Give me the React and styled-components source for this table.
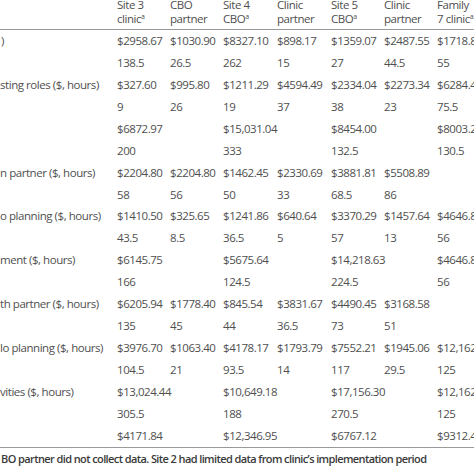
import React from "react";
import styled, { createGlobalStyle } from "styled-components";

const Global = createGlobalStyle`
  html, body {
    margin: 0;
    padding: 0;
    background: #ffffff;
    overflow: hidden;
  }
  body {
    width: 474px;
    height: 474px;
    font-family: "Open Sans", "Noto Sans", sans-serif;
    color: #4f4f4f;
  }
`;

const COLS = "117px 53px 53px 54px 54px 53px 53px 60px";

const Page = styled.div`
  width: 474px;
  overflow: hidden;
  font-size: 11.5px;
  letter-spacing: -0.45px;
`;

const Header = styled.div`
  display: grid;
  grid-template-columns: ${COLS};
  margin-top: -2px;
  padding-bottom: 3px;
  border-bottom: 1px solid #9a9a9a;
  line-height: 14px;
`;

const HeadCell = styled.div`
  white-space: nowrap;
  overflow: visible;
`;

const Sup = styled.sup`
  font-size: 7px;
  line-height: 0;
  vertical-align: 4px;
`;

const Body = styled.div`
  border-bottom: 1px solid #9a9a9a;
`;

const Row = styled.div`
  display: grid;
  grid-template-columns: ${COLS};
  height: 21.94px;
  align-items: center;
  line-height: 16px;
`;

const Cell = styled.div`
  white-space: nowrap;
  overflow: visible;
`;

const Label = styled(Cell)`
  padding-left: ${(p) => p.$indent || 0}px;
`;

const Footnote = styled.div`
  padding-top: 4px;
  padding-left: 1px;
  line-height: 14px;
  font-size: 11px;
  font-weight: 600;
  letter-spacing: -0.6px;
  color: #3a3a3a;
  white-space: nowrap;
`;

const headers = [
  ["Site 3", "clinic", true],
  ["CBO", "partner", false],
  ["Site 4", "CBO", true],
  ["Clinic", "partner", false],
  ["Site 5", "CBO", true],
  ["Clinic", "partner", false],
  ["Family", "7 clinic", true],
];

const rows = [
  [")", "$2958.67", "$1030.90", "$8327.10", "$898.17", "$1359.07", "$2487.55", "$1718.80"],
  ["", "138.5", "26.5", "262", "15", "27", "44.5", "55"],
  ["sting roles ($, hours)", "$327.60", "$995.80", "$1211.29", "$4594.49", "$2334.04", "$2273.34", "$6284.40"],
  ["", "9", "26", "19", "37", "38", "23", "75.5"],
  ["", "$6872.97", "", "$15,031.04", "", "$8454.00", "", "$8003.20"],
  ["", "200", "", "333", "", "132.5", "", "130.5"],
  ["n partner ($, hours)", "$2204.80", "$2204.80", "$1462.45", "$2330.69", "$3881.81", "$5508.89", ""],
  ["", "58", "56", "50", "33", "68.5", "86", ""],
  ["o planning ($, hours)", "$1410.50", "$325.65", "$1241.86", "$640.64", "$3370.29", "$1457.64", "$4646.80"],
  ["", "43.5", "8.5", "36.5", "5", "57", "13", "56"],
  ["ment ($, hours)", "$6145.75", "", "$5675.64", "", "$14,218.63", "", "$4646.80"],
  ["", "166", "", "124.5", "", "224.5", "", "56"],
  ["th partner ($, hours)", "$6205.94", "$1778.40", "$845.54", "$3831.67", "$4490.45", "$3168.58", ""],
  ["", "135", "45", "44", "36.5", "73", "51", ""],
  ["lo planning ($, hours)", "$3976.70", "$1063.40", "$4178.17", "$1793.79", "$7552.21", "$1945.06", "$12,162.00"],
  ["", "104.5", "21", "93.5", "14", "117", "29.5", "125"],
  ["vities ($, hours)", "$13,024.44", "", "$10,649.18", "", "$17,156.30", "", "$12,162.00"],
  ["", "305.5", "", "188", "", "270.5", "", "125"],
  ["", "$4171.84", "", "$12,346.95", "", "$6767.12", "", "$9312.40"],
];

export default function App() {
  return (
    <Page>
      <Global />
      <Header>
        <HeadCell>
          <br />
          &nbsp;
        </HeadCell>
        {headers.map(([a, b, sup], i) => (
          <HeadCell key={i}>
            {a}
            <br />
            {b}
            {sup && <Sup>a</Sup>}
          </HeadCell>
        ))}
      </Header>
      <Body>
        {rows.map((r, i) => (
          <Row key={i}>
            <Label $indent={r[0] === ")" ? 1 : 0}>{r[0]}</Label>
            {r.slice(1).map((v, j) => (
              <Cell key={j}>{v}</Cell>
            ))}
          </Row>
        ))}
      </Body>
      <Footnote>
        BO partner did not collect data. Site 2 had limited data from clinic’s implementation period
      </Footnote>
    </Page>
  );
}
